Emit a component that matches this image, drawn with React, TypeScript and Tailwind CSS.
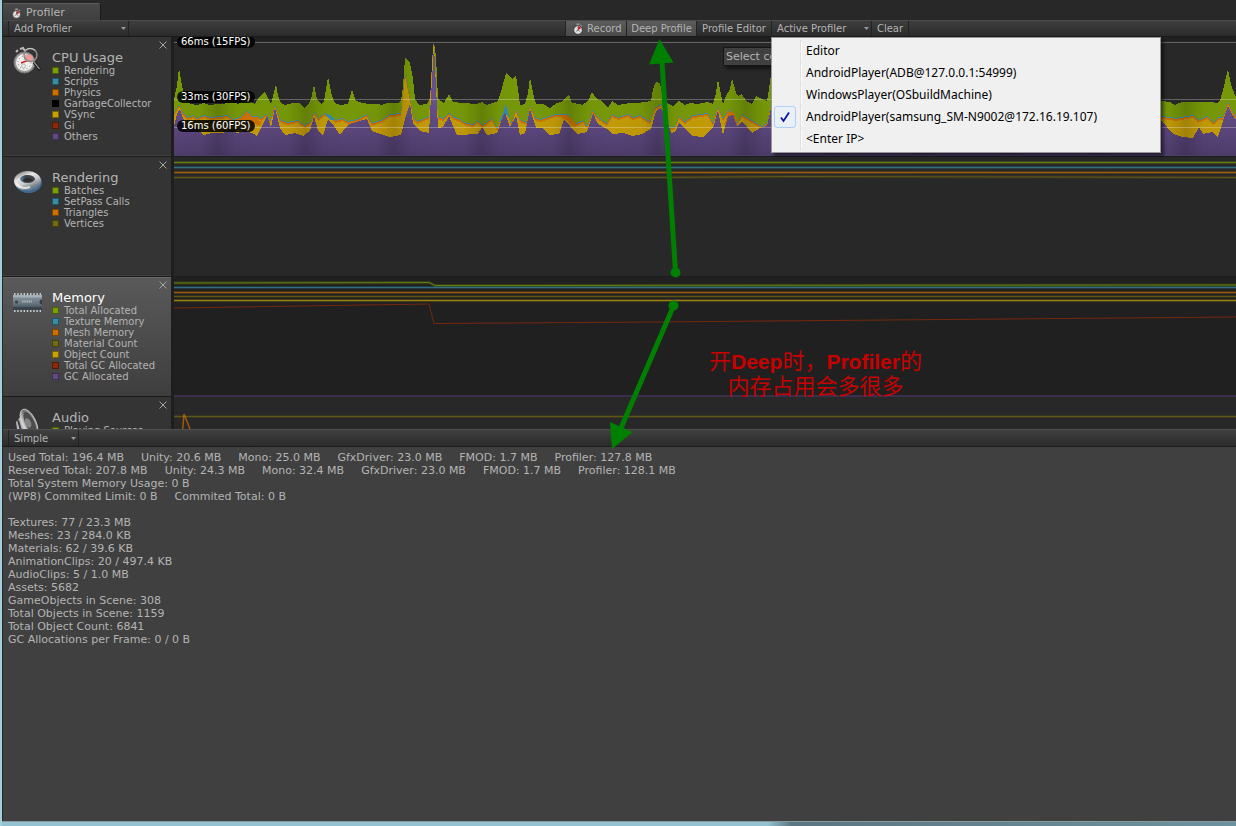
import { useState, type ReactNode } from "react";
import clsx from "clsx";

const GREEN = "#7a9e0a";
const BLUE = "#388ca8";
const ORANGE = "#cc7000";
const OLIVE = "#736a12";
const YELLOW = "#c8a108";
const RED = "#8a2a08";
const PURPLE = "#634a86";

// frame times, "x,y" pairs on a 1062x120 canvas
const RENDERING =
    "0,62 3,49 5,31 8,49 11,62 16,67 23,68 29,66 36,68 43,67 49,67 58,65 64,67 70,62 72,52 75,64 81,67 84,62 88,57 91,55 94,61 97,67 99,59 102,47 104,59 107,66 111,68 119,66 126,66 130,71 134,68 137,62 140,48 143,62 147,67 150,64 154,40 158,59 161,66 166,68 174,67 178,52 182,64 188,66 196,67 203,67 208,68 213,66 224,66 227,64 229,49 230,36 231,21 234,23 236,26 239,42 241,62 245,68 253,67 256,61 259,26 260,6 262,19 264,62 270,66 275,57 279,65 289,66 303,67 308,65 313,68 318,66 324,64 328,51 332,36 338,42 342,38 344,52 346,68 351,67 354,56 356,40 359,56 362,67 369,67 376,71 383,66 389,64 395,57 398,66 406,67 408,68 414,64 418,55 423,62 428,64 434,71 438,64 444,68 449,67 456,66 463,66 471,65 477,64 479,52 482,45 486,46 489,62 493,66 499,69 505,64 511,68 516,66 524,67 533,65 539,67 542,56 544,42 547,57 549,67 552,59 556,52 558,41 562,56 564,59 568,57 572,64 578,67 582,59 588,62 593,64 595,52 597,38 600,50 620,67 988,64 996,65 1001,68 1008,65 1026,65 1036,65 1043,66 1046,64 1049,53 1054,32 1057,48 1061,58 1062,60";
const SCRIPTS =
    "0,76 3,71 5,67 9,76 13,80 19,78 23,81 30,78 36,80 46,79 53,78 59,82 66,80 73,74 79,79 84,79 88,81 92,76 96,84 101,68 106,82 113,85 124,83 131,88 137,84 140,74 144,81 151,76 156,78 161,83 169,81 174,84 183,82 193,77 198,86 203,84 209,82 216,77 227,76 231,36 234,52 237,66 239,79 243,84 255,79 259,9 260,6 264,79 269,81 275,75 279,80 284,81 293,86 299,87 303,83 308,88 318,81 323,91 328,78 332,67 334,74 337,86 342,72 346,82 353,85 356,68 361,80 366,82 381,77 394,77 401,87 409,83 413,89 419,73 423,79 433,86 438,77 444,80 454,77 459,80 466,78 476,84 481,70 487,67 493,79 496,91 501,89 505,79 511,84 519,78 534,76 539,86 544,69 549,81 555,72 559,75 563,86 568,77 576,82 588,89 593,86 597,67 600,74 620,84 988,79 996,80 1001,81 1019,78 1024,83 1033,79 1039,85 1044,80 1049,80 1054,65 1058,73 1062,79";
const OTHERS =
    "0,89 3,77 6,72 9,81 13,91 18,89 23,92 30,98 38,96 49,96 58,92 63,96 71,94 78,96 83,99 88,89 93,79 97,90 101,71 106,91 111,98 121,96 129,99 136,94 140,79 144,94 149,99 154,82 160,89 166,98 173,89 178,86 183,85 188,83 193,82 198,94 203,96 216,100 227,98 231,82 236,67 239,86 246,94 255,96 257,59 260,9 264,91 269,90 275,79 279,89 283,98 304,97 308,90 313,98 323,96 328,82 331,75 336,90 342,79 346,98 351,96 356,72 362,91 369,91 375,98 385,97 390,83 396,89 403,97 413,95 419,76 424,87 433,92 439,97 449,96 458,99 468,97 477,92 482,74 487,71 493,83 497,96 501,95 505,86 511,91 518,99 529,100 539,91 544,73 549,98 554,79 559,78 563,89 568,84 578,96 586,91 593,89 597,71 600,80 620,90 988,84 999,97 1009,100 1019,101 1025,90 1029,97 1038,95 1044,100 1049,84 1054,69 1058,77 1062,83";

interface LegendItem {
    label: string;
    color: string;
}

interface ModuleProps {
    title: string;
    icon: ReactNode;
    legend: LegendItem[];
    selected?: boolean;
    children: ReactNode;
}

function Module({ title, icon, legend, selected, children }: ModuleProps) {
    return (
        <section aria-label={title} className="flex h-[120px] shrink-0">
            <div
                className={clsx(
                    "flex w-[168px] shrink-0 border-b border-b-[#1c1c1c] pl-[9px]",
                    selected
                        ? "bg-linear-to-b from-[#5a5a5a] to-[#3e3e3e] shadow-[inset_0_1px_#686868]"
                        : "bg-[#343434] shadow-[inset_0_-1px_#3f3f3f]",
                )}>
                <div className="w-10 shrink-0 pt-2">{icon}</div>
                <div className="grow pt-[14px] whitespace-nowrap">
                    <h2 className={clsx("text-[13px] leading-[14px]", selected ? "text-white" : "text-[#b4b4b4]")}>{title}</h2>
                    <ul className="text-[10px] leading-[11px] text-[#b4b4b4]">
                        {legend.map((l) => (
                            <li key={l.label} className="flex items-center gap-[5px]">
                                <span
                                    className="size-[7px] border border-black/40"
                                    style={{ backgroundColor: l.color }}
                                />
                                {l.label}
                            </li>
                        ))}
                    </ul>
                </div>
                <button type="button" aria-label={`Remove ${title}`} className="-ml-4 size-4 shrink-0 self-start p-1">
                    <svg viewBox="0 0 8 8" className="size-2" stroke="#a4a4a4" strokeWidth="1">
                        <path d="M.5.5l7 7M7.5.5l-7 7" />
                    </svg>
                </button>
            </div>
            <div
                className={clsx(
                    "relative min-w-0 grow border-l-[3px] border-l-[#1e1e1e]",
                    selected ? "bg-[#202020]" : "bg-[#282828]",
                )}>
                {children}
            </div>
        </section>
    );
}

function Chart({ children }: { children: ReactNode }) {
    return (
        <svg viewBox="0 0 1062 120" preserveAspectRatio="none" className="block h-[120px] w-full" fill="none">
            {children}
        </svg>
    );
}

function Line({ color, points }: { color: string; points: string }) {
    return (
        <>
            <polyline points={points} stroke={color} strokeOpacity=".22" strokeWidth="3" />
            <polyline points={points} stroke={color} strokeOpacity=".65" strokeWidth="1" />
        </>
    );
}

function CpuChart() {
    return (
        <>
            <Chart>
                <defs>
                    <linearGradient id="others" x1="0" y1="0" x2="0" y2="1">
                        <stop offset="0.5" stopColor="#68508c" />
                        <stop offset="1" stopColor="#4d3c6a" />
                    </linearGradient>
                    <linearGradient id="shade" x1="0" y1="0" x2="44" y2="0" gradientUnits="userSpaceOnUse" spreadMethod="reflect">
                        <stop offset="0" stopColor="#000" stopOpacity="0" />
                        <stop offset=".6" stopColor="#000" stopOpacity=".02" />
                        <stop offset="1" stopColor="#000" stopOpacity=".16" />
                    </linearGradient>
                </defs>
                <path d="M0 0H1062V4H0z" fill="#1f1f1f" />
                <g shapeRendering="crispEdges">
                    <polygon points={`0,118 ${RENDERING} 1062,118`} fill="#769808" />
                    <polygon points={`0,118 ${SCRIPTS} 1062,118`} fill={BLUE} />
                    <polygon points={`0,118 ${SCRIPTS} 1062,118`} fill={ORANGE} transform="translate(0 1)" />
                    <polygon points={`0,116 ${SCRIPTS} 1062,116`} fill="#c29a06" transform="translate(0 3)" />
                    <path d="M66 83l7-6 8 4 7 4-2 4-14-6zM550 88l5-14 5 2 4 10-5-6zM386 81l8-2 8 8-2 3-8-7z" fill={ORANGE} />
                    <path d="M326 84l6-16 3 12-3-2zM151 77l5 1 5 5h-5z" fill={BLUE} />
                    <polygon points={`0,119 ${OTHERS} 1062,119`} fill="url(#others)" />
                </g>
                <polygon points={`0,118 ${RENDERING} 1062,118`} fill="url(#shade)" />
                <path d="M0 5.5H1062M0 62.5H1062M0 90.5H1062" stroke="#fff" strokeOpacity=".28" />
                <path d="M0 119.5H1062" stroke="#1c1c1c" />
            </Chart>
            <ul className="absolute inset-0 text-[10px] text-white">
                <FrameLabel className="-top-px">66ms (15FPS)</FrameLabel>
                <FrameLabel className="top-[54px]">33ms (30FPS)</FrameLabel>
                <FrameLabel className="top-[83px]">16ms (60FPS)</FrameLabel>
            </ul>
        </>
    );
}

function FrameLabel({ className, children }: { className: string; children: ReactNode }) {
    return (
        <li className={clsx("absolute left-[3px] h-3 rounded-full bg-black/85 px-1 leading-3", className)}>
            {children}
        </li>
    );
}

function Stopwatch({ className }: { className: string }) {
    return (
        <svg viewBox="0 0 12 12" className={className} aria-hidden="true">
            <path d="M4.500.5h3v2h-3z" fill="#999" />
            <path d="M9 1.500l1.500 1.500-1 1L8 2.500z" fill="#888" />
            <circle cx="6" cy="7" r="4.300" fill="#e4e0dd" stroke="#333" strokeWidth=".8" />
            <path d="M6 7V3.200A3.800 3.800 0 0 1 9.200 5.200z" fill="#d11a24" />
            <path d="M6 3.500V7.500M4 8.500l2-1.500 2 1.500" stroke="#666" strokeWidth=".8" fill="none" />
        </svg>
    );
}

function CpuIcon() {
    return (
        <svg viewBox="0 0 32 32" className="size-8" fill="none" aria-hidden="true">
            <path d="M8 4l3-1 2 3M4 7l2-2" stroke="#bbb" strokeWidth="2" />
            <circle cx="12.500" cy="17.500" r="10.500" fill="#9c9c9c" stroke="#777" />
            <circle cx="12.500" cy="17.500" r="8.500" fill="#f0efee" />
            <circle cx="12.500" cy="17.500" r="6.500" stroke="#777" strokeDasharray="1 2.400" />
            <circle cx="11.500" cy="21" r="2" stroke="#aaa" strokeWidth=".8" />
            <path d="M9 18l8-3" stroke="#c22" strokeWidth="1.500" />
            <ellipse cx="16.500" cy="13" rx="4.500" ry="3.500" fill="#ee9a98" />
            <circle cx="18.500" cy="10" r="6.500" stroke="#8a8a8a" strokeWidth="1.500" />
            <path d="M13 5.500a7 7 0 0 1 10 0" stroke="#ccc" />
            <path d="M22 17l6 8" stroke="#222" strokeWidth="3.500" />
            <path d="M22 17l5.500 7" stroke="#aaa" strokeWidth="1.200" />
        </svg>
    );
}

function TorusIcon() {
    return (
        <svg viewBox="0 0 32 32" className="size-8" aria-hidden="true">
            <defs>
                <linearGradient id="torus" x1=".2" y1="0" x2=".8" y2="1">
                    <stop offset="0" stopColor="#777" />
                    <stop offset=".3" stopColor="#e6e6e6" />
                    <stop offset=".55" stopColor="#c9c9c9" />
                    <stop offset=".8" stopColor="#75808a" />
                    <stop offset="1" stopColor="#3f6a94" />
                </linearGradient>
                <linearGradient id="hole" x1="0" y1="0" x2="1" y2="0">
                    <stop offset="0" stopColor="#5d87a8" />
                    <stop offset=".35" stopColor="#39444d" />
                    <stop offset="1" stopColor="#444" />
                </linearGradient>
            </defs>
            <ellipse cx="16.500" cy="17.500" rx="13.500" ry="10.500" fill="#3c6790" />
            <ellipse cx="15.500" cy="16" rx="13.500" ry="10" fill="url(#torus)" />
            <ellipse cx="15.500" cy="14" rx="7.500" ry="4" fill="url(#hole)" />
            <path d="M11 16c1-4 7-4 10-1-2 2-7 2.500-10 1z" fill="#2c2c2c" />
            <path d="M4 18c3 5 9 6 14 4" fill="none" stroke="#fff" strokeOpacity=".7" strokeWidth="2" />
        </svg>
    );
}

function ChipIcon() {
    return (
        <svg viewBox="0 0 32 32" className="size-8" aria-hidden="true">
            <defs>
                <linearGradient id="chip" x1="0" y1="0" x2="0" y2="1">
                    <stop offset="0" stopColor="#8d99a1" />
                    <stop offset=".6" stopColor="#66757f" />
                    <stop offset="1" stopColor="#3a454d" />
                </linearGradient>
            </defs>
            <path d="M2 9H29M2 26H29" stroke="#c5cacd" strokeWidth="2" strokeDasharray="1.500 1.700" />
            <path d="M1 10H30V24.500H1z" fill="url(#chip)" />
            <path d="M1 10H30V12.500H1z" fill="#a4afb6" />
            <path d="M1 22H30V25H1z" fill="#38434b" />
            <circle cx="4.500" cy="17" r="1.500" fill="#333e46" />
            <path d="M30 14.500a2.500 2.500 0 0 0 0 5z" fill="#333e46" />
            <path d="M10 16.500h10" stroke="#aab4ba" strokeWidth="2" strokeDasharray="1.500 .7" />
        </svg>
    );
}

function SpeakerIcon() {
    return (
        <svg viewBox="0 0 32 32" className="size-8" aria-hidden="true">
            <defs>
                <linearGradient id="cone" x1="0" y1="0" x2="1" y2="0">
                    <stop offset="0" stopColor="#e6e6e6" />
                    <stop offset=".5" stopColor="#6d6d6d" />
                    <stop offset="1" stopColor="#a5a5a5" />
                </linearGradient>
            </defs>
            <path d="M4 17l6-7 6 20-10 1z" fill="#b9b8c4" />
            <path d="M6 15l4 14" stroke="#3d3d3d" strokeWidth="2" />
            <ellipse cx="17" cy="18" rx="7" ry="15" transform="rotate(-25 17 18)" fill="url(#cone)" stroke="#ccc" strokeWidth=".8" />
            <ellipse cx="18" cy="18" rx="4.500" ry="12" transform="rotate(-25 18 18)" fill="#4c4c4c" />
            <ellipse cx="16" cy="18" rx="3" ry="5" transform="rotate(-25 16 18)" fill="#858585" />
        </svg>
    );
}

function Caret() {
    return (
        <svg viewBox="0 0 5 3" className="h-[3px] w-[5px] shrink-0" aria-hidden="true">
            <path d="M0 0h5L2.500 3z" fill="#999" />
        </svg>
    );
}

function ToolbarSelect({ label, options, className }: { label: string; options: string[]; className: string }) {
    return (
        <div className={clsx("flex items-center border-x border-[#222] pr-[2px]", className)}>
            <select aria-label={label} className="h-full min-w-0 grow appearance-none pl-[5px] outline-none">
                {options.map((o) => (
                    <option key={o}>{o}</option>
                ))}
            </select>
            <Caret />
        </div>
    );
}

function ToolbarButton({ on, className, children }: { on?: boolean; className: string; children: ReactNode }) {
    return (
        <button
            type="button"
            aria-pressed={on}
            className={clsx(
                "flex shrink-0 items-center border-r border-[#222] whitespace-nowrap",
                on && "bg-linear-to-b from-[#5c5c5c] to-[#4a4a4a]",
                className,
            )}>
            {children}
        </button>
    );
}

const PLAYERS = [
    "Editor",
    "AndroidPlayer(ADB@127.0.0.1:54999)",
    "WindowsPlayer(OSbuildMachine)",
    "AndroidPlayer(samsung_SM-N9002@172.16.19.107)",
    "<Enter IP>",
];

function PlayerMenu() {
    const [active, setActive] = useState(PLAYERS[3]);
    return (
        <div
            role="menu"
            className="absolute top-4 -left-px z-20 w-[390px] border border-[#979797] bg-[#f0f0f0] p-[2px] font-['Noto_Sans','Noto_Sans_CJK_SC',sans-serif] text-[12px] text-black shadow-[3px_3px_3px_rgba(0,0,0,0.5)]">
            {PLAYERS.map((p) => (
                <button
                    key={p}
                    type="button"
                    role="menuitemradio"
                    aria-checked={p === active}
                    onClick={() => setActive(p)}
                    className="flex h-[22px] w-full items-center text-left">
                    <span className="flex h-full w-[27px] shrink-0 items-center border-r border-[#e0e0e0]">
                        {p === active && (
                            <span className="flex size-[22px] items-center justify-center rounded-[3px] border border-[#aecff7] bg-[#e9f0f8]">
                                <svg viewBox="0 0 10 12" className="h-3 w-[10px]" fill="none">
                                    <path d="M1 6.500l2.500 3.500L9 1.500" stroke="#0c12a1" strokeWidth="1.800" />
                                </svg>
                            </span>
                        )}
                    </span>
                    <span className="border-l border-white pl-1">{p}</span>
                </button>
            ))}
        </div>
    );
}

function Toolbar() {
    return (
        <div className="flex h-[17px] border-y border-t-[#4a4a4a] border-b-[#1a1a1a] bg-linear-to-b from-[#3e3e3e] to-[#2b2b2b] pl-[5px]">
            <ToolbarSelect label="Add Profiler" options={["Add Profiler", "CPU", "GPU", "Rendering"]} className="w-[121px]" />
            <div className="grow-4" />
            <ToolbarButton on className="w-[62px] gap-[3px] border-l pl-[6px]">
                <Stopwatch className="size-3" />
                Record
            </ToolbarButton>
            <ToolbarButton on className="w-[70px] justify-center">
                Deep Profile
            </ToolbarButton>
            <ToolbarButton className="w-[75px] justify-center">Profile Editor</ToolbarButton>
            <div className="relative flex">
                <button
                    type="button"
                    aria-haspopup="menu"
                    aria-expanded="true"
                    className="flex w-[100px] items-center justify-between border-r border-[#222] pr-[2px] pl-[5px]">
                    Active Profiler
                    <Caret />
                </button>
                <div
                    role="tooltip"
                    className="absolute top-[26px] -left-[49px] z-10 h-[19px] w-[120px] overflow-hidden border border-[#161616] bg-[#404040] pl-[2px] text-[11px] leading-[17px] whitespace-nowrap shadow-[3px_3px_3px_rgba(0,0,0,0.5)]">
                    Select connected
                </div>
                <PlayerMenu />
            </div>
            <ToolbarButton className="w-[37px] justify-center">Clear</ToolbarButton>
            <div className="grow-3" />
        </div>
    );
}

const MEMORY = [
    ["Used Total: 196.4 MB", "Unity: 20.6 MB", "Mono: 25.0 MB", "GfxDriver: 23.0 MB", "FMOD: 1.7 MB", "Profiler: 127.8 MB"],
    ["Reserved Total: 207.8 MB", "Unity: 24.3 MB", "Mono: 32.4 MB", "GfxDriver: 23.0 MB", "FMOD: 1.7 MB", "Profiler: 128.1 MB"],
    ["Total System Memory Usage: 0 B"],
    ["(WP8) Commited Limit: 0 B", "Commited Total: 0 B"],
];

const OBJECTS = [
    "Textures: 77 / 23.3 MB",
    "Meshes: 23 / 284.0 KB",
    "Materials: 62 / 39.6 KB",
    "AnimationClips: 20 / 497.4 KB",
    "AudioClips: 5 / 1.0 MB",
    "Assets: 5682",
    "GameObjects in Scene: 308",
    "Total Objects in Scene: 1159",
    "Total Object Count: 6841",
    "GC Allocations per Frame: 0 / 0 B",
];

function Details() {
    return (
        <div className="grow bg-[#404040] px-[5px] pt-1 text-[11px] leading-[13px]">
            {MEMORY.map((row) => (
                <p key={row[0]} className="flex gap-[17px] whitespace-nowrap">
                    {row.map((m) => (
                        <span key={m}>{m}</span>
                    ))}
                </p>
            ))}
            <ul className="pt-[13px]">
                {OBJECTS.map((o) => (
                    <li key={o}>{o}</li>
                ))}
            </ul>
        </div>
    );
}

function Annotations() {
    return (
        <div className="pointer-events-none absolute inset-0 z-10 overflow-hidden">
            <svg width="720" height="460" className="absolute top-0 left-0" fill="#008000" stroke="#008000" aria-hidden="true">
                <path d="M673.500 272L660 62M671.500 306L619 428" strokeWidth="5" />
                <path d="M657.500 39L647 64.500L671.500 62.500zM610 449L608 422L630.500 432z" stroke="none" />
                <circle cx="673.500" cy="272.500" r="5" stroke="none" />
                <circle cx="671.500" cy="305.500" r="5" stroke="none" />
            </svg>
            <p className="absolute top-[349px] left-[707px] text-center font-['Liberation_Sans','Noto_Sans_CJK_SC',sans-serif] text-[22px] leading-[25px] whitespace-nowrap text-[#c80000]">
                开<b className="text-[21px]">Deep</b>时，<b className="text-[21px]">Profiler</b>的
                <br />
                内存占用会多很多
            </p>
        </div>
    );
}

export default function App() {
    return (
        <div className="relative flex min-h-screen flex-col border-l-2 border-l-[#a3cedb] bg-[#282828] pl-px font-['DejaVu_Sans',Verdana,sans-serif] text-[#b4b4b4]">
            <header className="flex h-5 items-end">
                <h1 className="flex h-[17px] w-[98px] items-center gap-1 rounded-tr-[3px] border-t border-r border-t-[#5a5a5a] border-r-[#1a1a1a] bg-linear-to-b from-[#4a4a4a] to-[#3e3e3e] pt-[3px] pl-2 text-[11px]">
                    <Stopwatch className="size-[11px]" />
                    Profiler
                </h1>
            </header>
            <div className="text-[10px]">
                <Toolbar />
            </div>
            <main className="h-[392px] overflow-hidden">
                <Module
                    title="CPU Usage"
                    icon={<CpuIcon />}
                    legend={[
                        { label: "Rendering", color: GREEN },
                        { label: "Scripts", color: BLUE },
                        { label: "Physics", color: ORANGE },
                        { label: "GarbageCollector", color: "#000" },
                        { label: "VSync", color: YELLOW },
                        { label: "Gi", color: RED },
                        { label: "Others", color: PURPLE },
                    ]}>
                    <CpuChart />
                </Module>
                <Module
                    title="Rendering"
                    icon={<TorusIcon />}
                    legend={[
                        { label: "Batches", color: GREEN },
                        { label: "SetPass Calls", color: BLUE },
                        { label: "Triangles", color: ORANGE },
                        { label: "Vertices", color: OLIVE },
                    ]}>
                    <Chart>
                        <Line color={GREEN} points="0,5.5 1062,5.5" />
                        <Line color={BLUE} points="0,10.500 1062,10.500" />
                        <Line color={ORANGE} points="0,15.500 1062,15.500" />
                        <Line color={OLIVE} points="0,20.500 480,20.500 620,19.500 880,20 1062,20.500" />
                        <path d="M0 119.500H1062" stroke="#1c1c1c" />
                    </Chart>
                </Module>
                <Module
                    title="Memory"
                    icon={<ChipIcon />}
                    selected
                    legend={[
                        { label: "Total Allocated", color: GREEN },
                        { label: "Texture Memory", color: BLUE },
                        { label: "Mesh Memory", color: ORANGE },
                        { label: "Material Count", color: OLIVE },
                        { label: "Object Count", color: YELLOW },
                        { label: "Total GC Allocated", color: RED },
                        { label: "GC Allocated", color: PURPLE },
                    ]}>
                    <Chart>
                        <Line color={BLUE} points="0,10.500 1062,10.500" />
                        <Line color={GREEN} points="0,6 255,5.500 261,8.500 1062,8" />
                        <Line color={ORANGE} points="0,15.500 1062,15.500" />
                        <Line color={OLIVE} points="0,19.500 1062,19.500" />
                        <Line color={YELLOW} points="0,23.500 1062,23.500" />
                        <polyline points="0,31 255,27 260,46.500 480,45 1062,40" stroke={RED} strokeOpacity=".8" />
                        <path d="M0 119H1062" stroke="#3b2f4e" strokeWidth="2" />
                    </Chart>
                </Module>
                <Module
                    title="Audio"
                    icon={<SpeakerIcon />}
                    legend={[{ label: "Playing Sources", color: GREEN }]}>
                    <Chart>
                        <Line color={OLIVE} points="0,19.500 1062,19.500" />
                        <polyline points="8,40 10,17 16,32 20,40" stroke={ORANGE} strokeOpacity=".7" strokeWidth="1.500" />
                    </Chart>
                </Module>
            </main>
            <div className="flex h-[18px] border-y border-t-[#4e4e4e] border-b-[#1c1c1c] bg-linear-to-b from-[#404040] to-[#2b2b2b] pl-[5px] text-[10px]">
                <ToolbarSelect label="Memory view" options={["Simple", "Detailed"]} className="w-[71px]" />
            </div>
            <Details />
            <footer className="-ml-px h-[5px] border-t border-t-[#8a9a9a] bg-linear-to-r from-[#93c3d2] from-62% via-[#5c7683] via-64% to-[#6d929f]" />
            <Annotations />
        </div>
    );
}
